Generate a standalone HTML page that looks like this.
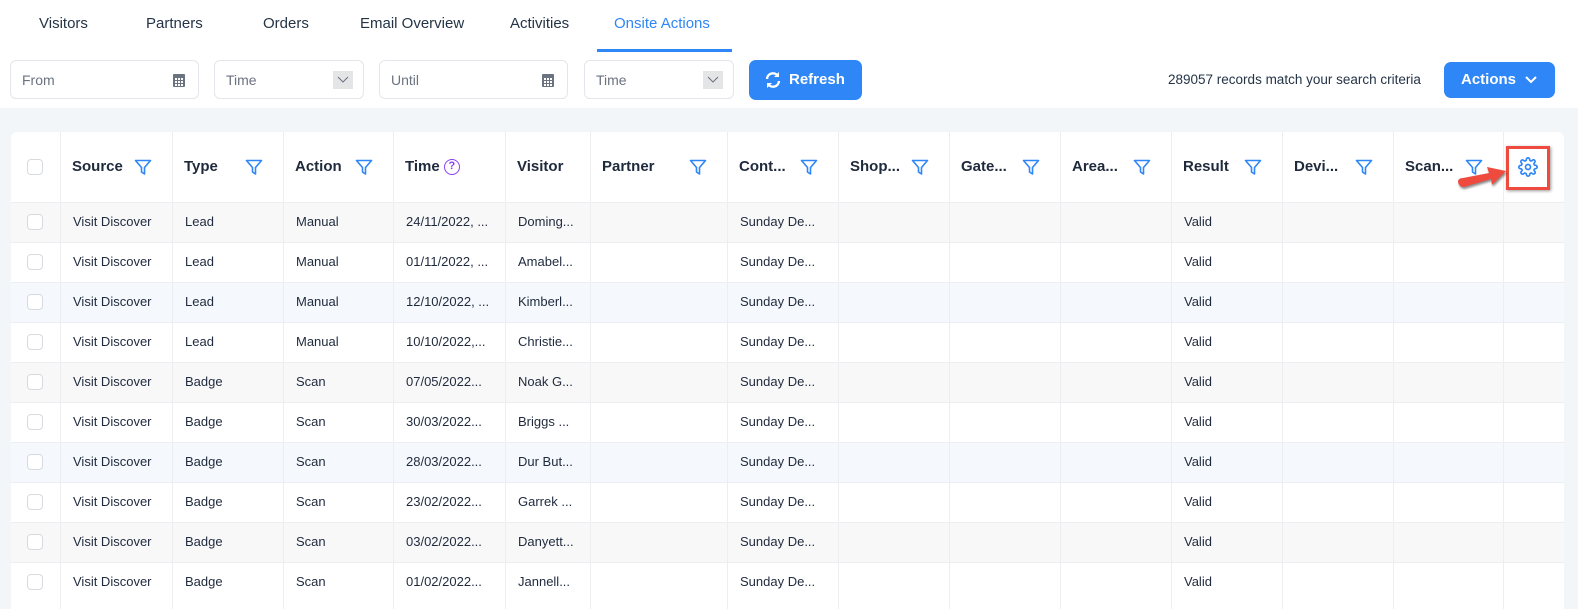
<!DOCTYPE html>
<html><head><style>
*{box-sizing:border-box;margin:0;padding:0}
body{width:1578px;height:609px;overflow:hidden;background:#fff;font-family:"Liberation Sans",sans-serif;color:#1f2a3c;position:relative}
.tab{position:absolute;top:15px;font-size:15px;color:#243447}
.inp{position:absolute;top:60px;height:39px;border:1px solid #e3e6ea;border-radius:6px;font-size:14px;color:#6b7280;padding:11px 11px}
.bg{position:absolute;top:108px;left:0;width:1578px;height:501px;background:#f3f6f9}
.card{position:absolute;top:132px;left:11px;width:1553px;height:477px;background:#fff;border-radius:6px 6px 0 0;overflow:hidden}
.cell{position:absolute;height:40px;font-size:13px;line-height:40px;white-space:nowrap}
.vl{position:absolute;top:0;width:1px;height:477px;background:#eceef1}
.hd{position:absolute;top:0;height:70px;line-height:70px;font-size:15px;font-weight:bold;color:#1f2a3c}
.cb{position:absolute;width:16px;height:16px;border:1px solid #d7dade;border-radius:4px;background:#fff}
</style></head><body>
<div class="tab" style="left:39px">Visitors</div>
<div class="tab" style="left:146px">Partners</div>
<div class="tab" style="left:263px">Orders</div>
<div class="tab" style="left:360px">Email Overview</div>
<div class="tab" style="left:510px">Activities</div>
<div class="tab" style="left:614px;color:#2f86f6">Onsite Actions</div>
<div style="position:absolute;left:597px;top:49px;width:135px;height:3px;background:#2f86f6"></div>

<div class="inp" style="left:10px;width:189px">From<svg style="position:absolute;right:12px;top:11px" width="14" height="16" viewBox="0 0 14 16"><rect x="1" y="2" width="12" height="13" rx="1" fill="#6b7280"/><g fill="#fff"><rect x="3" y="6" width="2" height="2"/><rect x="6" y="6" width="2" height="2"/><rect x="9" y="6" width="2" height="2"/><rect x="3" y="9" width="2" height="2"/><rect x="6" y="9" width="2" height="2"/><rect x="9" y="9" width="2" height="2"/><rect x="3" y="12" width="2" height="2"/><rect x="6" y="12" width="2" height="2"/><rect x="9" y="12" width="2" height="2"/></g></svg></div>
<div class="inp" style="left:214px;width:150px">Time<span style="position:absolute;right:10px;top:10px;width:20px;height:18px;background:#e4e5e7;display:block"><svg width="20" height="18"><path d="M5 6l5 5 5-5" stroke="#6b7280" fill="none"/></svg></span></div>
<div class="inp" style="left:379px;width:189px">Until<svg style="position:absolute;right:12px;top:11px" width="14" height="16" viewBox="0 0 14 16"><rect x="1" y="2" width="12" height="13" rx="1" fill="#6b7280"/><g fill="#fff"><rect x="3" y="6" width="2" height="2"/><rect x="6" y="6" width="2" height="2"/><rect x="9" y="6" width="2" height="2"/><rect x="3" y="9" width="2" height="2"/><rect x="6" y="9" width="2" height="2"/><rect x="9" y="9" width="2" height="2"/><rect x="3" y="12" width="2" height="2"/><rect x="6" y="12" width="2" height="2"/><rect x="9" y="12" width="2" height="2"/></g></svg></div>
<div class="inp" style="left:584px;width:150px">Time<span style="position:absolute;right:10px;top:10px;width:20px;height:18px;background:#e4e5e7;display:block"><svg width="20" height="18"><path d="M5 6l5 5 5-5" stroke="#6b7280" fill="none"/></svg></span></div>
<div style="position:absolute;left:749px;top:60px;width:113px;height:40px;background:#2f86f6;border-radius:7px;color:#fff;font-weight:bold;font-size:15px;line-height:40px;padding-left:40px">Refresh<svg style="position:absolute;left:15px;top:11px" width="18" height="18" viewBox="0 0 18 18"><path d="M3 8a6 6 0 0 1 11-3M15 10a6 6 0 0 1-11 3" stroke="#fff" stroke-width="2.4" fill="none"/><path d="M15 1v5h-5zM3 17v-5h5z" fill="#fff"/></svg></div>
<div style="position:absolute;left:1168px;top:72px;font-size:13.5px;color:#243447">289057 records match your search criteria</div>
<div style="position:absolute;left:1444px;top:62px;width:111px;height:36px;background:#2f86f6;border-radius:7px;color:#fff;font-weight:bold;font-size:15px;line-height:36px;padding-left:17px">Actions<svg style="position:absolute;left:81px;top:13px" width="12" height="10"><path d="M1 2l5 5 5-5" stroke="#fff" stroke-width="2" fill="none"/></svg></div>

<div class="bg"></div>
<div class="card" id="c"></div>

<div style="position:absolute;left:1506px;top:146px;width:44px;height:44px;border:3px solid #ee4b3e;box-shadow:1px 1px 3px rgba(0,0,0,.4)"></div>
<svg style="position:absolute;left:1518px;top:157px" width="20" height="20" viewBox="0 0 24 24"><path d="M12 15a3 3 0 1 0 0-6 3 3 0 0 0 0 6z" stroke="#2f86f6" stroke-width="2" fill="none"/><path d="M19.4 15a1.7 1.7 0 0 0 .3 1.8l.1.1a2 2 0 1 1-2.8 2.8l-.1-.1a1.7 1.7 0 0 0-1.8-.3 1.7 1.7 0 0 0-1 1.5V21a2 2 0 1 1-4 0v-.1a1.7 1.700 0 0 0-1.1-1.5 1.7 1.7 0 0 0-1.8.3l-.1.1a2 2 0 1 1-2.8-2.8l.1-.1a1.7 1.7 0 0 0 .3-1.8 1.7 1.7 0 0 0-1.5-1H3a2 2 0 1 1 0-4h.1a1.7 1.7 0 0 0 1.5-1.1 1.7 1.7 0 0 0-.3-1.8l-.1-.1a2 2 0 1 1 2.8-2.8l.1.1a1.7 1.7 0 0 0 1.8.3H9a1.7 1.7 0 0 0 1-1.5V3a2 2 0 1 1 4 0v.1a1.7 1.7 0 0 0 1 1.5 1.7 1.7 0 0 0 1.8-.3l.1-.1a2 2 0 1 1 2.8 2.8l-.1.1a1.7 1.7 0 0 0-.3 1.8V9a1.7 1.7 0 0 0 1.5 1H21a2 2 0 1 1 0 4h-.1a1.7 1.7 0 0 0-1.5 1z" stroke="#2f86f6" stroke-width="2" fill="none"/></svg>
<svg style="position:absolute;left:1455px;top:160px" width="54" height="34"><path d="M3 22 Q4 27 9 27 L36 19 L37 25 L51 11 L32 7 L34 13 L8 18 Q3 18 3 22 Z" fill="#ee4b3e" style="filter:drop-shadow(1px 2px 1px rgba(0,0,0,.45))"/></svg>

<script>
var c=document.getElementById('c');
var xs=[0,49,161,272,382,494,579,716,827,938,1049,1160,1271,1382,1492,1553];
var heads=[null,'Source','Type','Action','Time','Visitor','Partner','Cont...','Shop...','Gate...','Area...','Result','Devi...','Scan...',null];
var filt=[0,1,1,1,0,0,1,1,1,1,1,1,1,1,0];
var h='';
var rows=[['Visit Discover','Lead','Manual','24/11/2022, ...','Doming...'],['Visit Discover','Lead','Manual','01/11/2022, ...','Amabel...'],['Visit Discover','Lead','Manual','12/10/2022, ...','Kimberl...'],['Visit Discover','Lead','Manual','10/10/2022,...','Christie...'],['Visit Discover','Badge','Scan','07/05/2022...','Noak G...'],['Visit Discover','Badge','Scan','30/03/2022...','Briggs ...'],['Visit Discover','Badge','Scan','28/03/2022...','Dur But...'],['Visit Discover','Badge','Scan','23/02/2022...','Garrek ...'],['Visit Discover','Badge','Scan','03/02/2022...','Danyett...'],['Visit Discover','Badge','Scan','01/02/2022...','Jannell...']];
for(var r=0;r<10;r++){var y=70+r*40;
 h+='<div style="position:absolute;left:0;top:'+y+'px;width:1553px;height:40px;background:'+(r%2==0?(r%4==0?'#f8f8f9':'#f5f8fc'):'#fff')+';border-top:1px solid #eceef1"></div>';
 h+='<div class="cb" style="left:16px;top:'+(y+12)+'px"></div>';
 for(var k=0;k<5;k++)h+='<div class="cell" style="left:'+(xs[k+1]+13)+'px;top:'+y+'px">'+rows[r][k]+'</div>';
 h+='<div class="cell" style="left:'+(xs[7]+13)+'px;top:'+y+'px">Sunday De...</div>';
 h+='<div class="cell" style="left:'+(xs[11]+13)+'px;top:'+y+'px">Valid</div>';
}
for(var i=1;i<15;i++)h+='<div class="vl" style="left:'+xs[i]+'px"></div>';
h+='<div class="cb" style="left:16px;top:27px"></div>';
for(var i=1;i<14;i++){
 h+='<div class="hd" style="left:'+(xs[i]+12)+'px">'+heads[i]+(i==4?' <span style="display:inline-block;width:16px;height:16px;border:1.5px solid #8b3ff0;border-radius:50%;color:#8b3ff0;font-size:11px;line-height:13px;text-align:center;vertical-align:2px">?</span>':'')+'</div>';
 if(filt[i])h+='<svg style="position:absolute;left:'+(xs[i+1]-38)+'px;top:27px" width="18" height="17" viewBox="0 0 18 17"><path d="M1.5 1.5h15l-6 7v6.5l-3-2v-4.5z" stroke="#2f86f6" stroke-width="1.6" fill="none" stroke-linejoin="round"/></svg>';
}
c.innerHTML=h;
</script>
</body></html>
